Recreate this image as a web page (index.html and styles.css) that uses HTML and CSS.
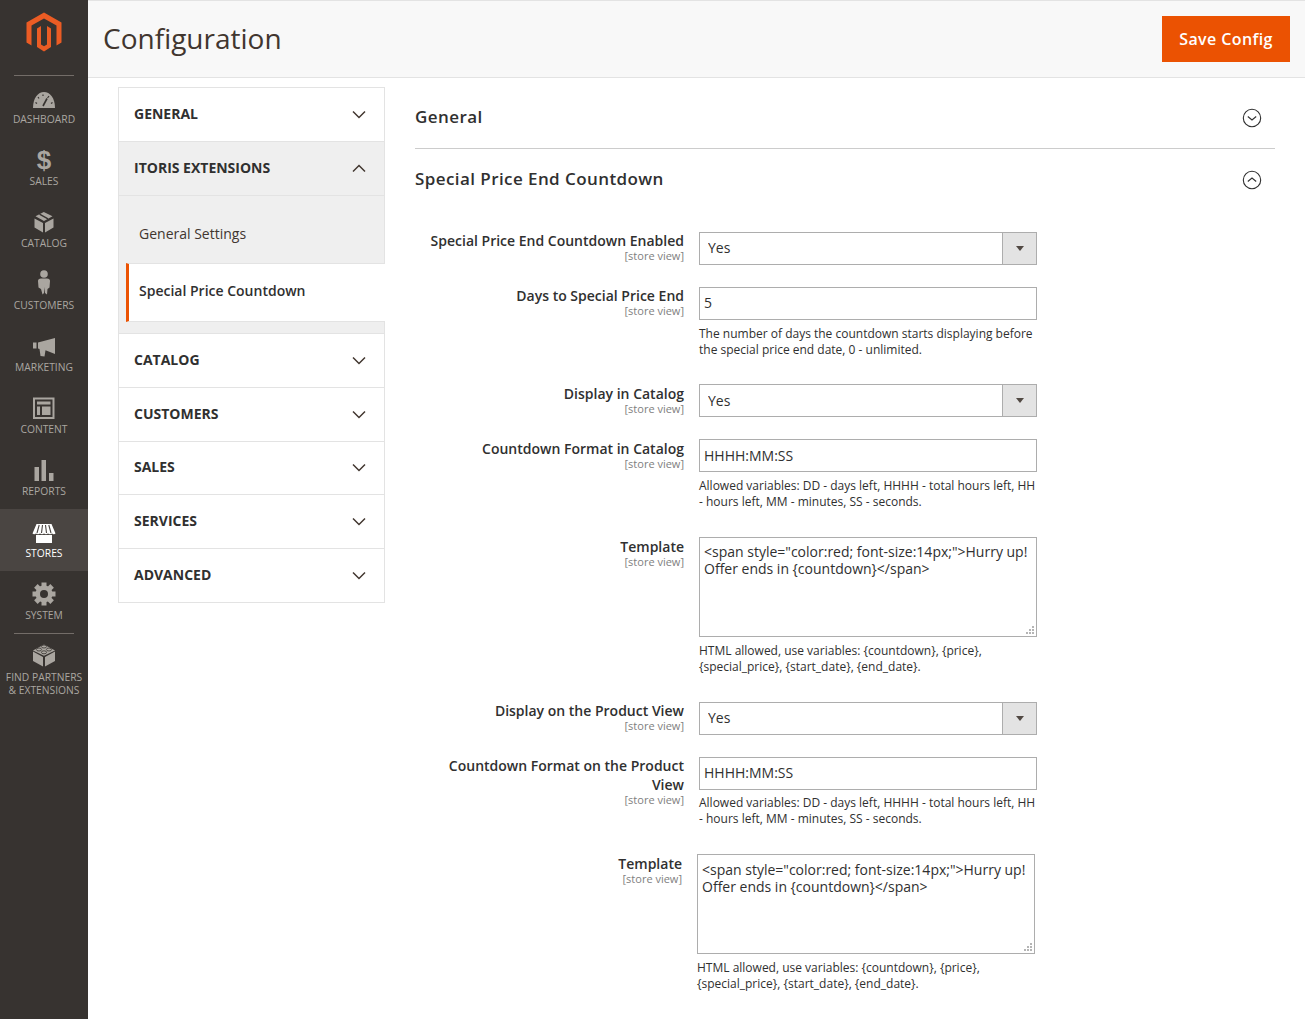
FILE: index.html
```html
<!DOCTYPE html>
<html lang="en">
<head>
  <meta charset="UTF-8">
  <title>Configuration</title>
  <link rel="stylesheet" href="styles.css">
</head>
<body>

  <nav class="side-menu">
    <div class="logo">
      <svg width="36" height="40" viewBox="26.5 12.5 36 40">
        <path fill="#eb5c24" d="M44.5 13 62 23V43L57 46V26L44.5 19 32 26V46L27 43V23Z"/>
        <path fill="#eb5c24" d="M37.5 29 41.5 26.5V45L44.5 46.8 47.5 45V26.5L51.5 29V47.5L44.5 52 37.5 47.5Z"/>
      </svg>
    </div>

    <a class="menu-item">
      <svg class="menu-icon" viewBox="0 0 24 24">
        <path fill="#aaa6a0" d="M1 22C1 12 6 6 12 6S23 12 23 22Z"/>
        <path stroke="#373330" stroke-width="1.2" d="M5 17.5 3.5 16.5M7 12.5 6 11M11 10V8.500M15.500 12 17 10M19 17.500 20.500 16.500"/>
        <path stroke="#373330" stroke-width="1.6" d="M11 20 15 12.500"/>
      </svg>
      <span>DASHBOARD</span>
    </a>
    <a class="menu-item">
      <span class="menu-icon dollar">$</span>
      <span>SALES</span>
    </a>
    <a class="menu-item">
      <svg class="menu-icon" viewBox="0 0 24 24">
        <path fill="#aaa6a0" d="M2.500 8.500 11 13V22.500L2.500 17.500ZM13 13 21.500 8.500V17.500L13 22.500ZM3.500 6.300 11.800 2 20.500 6.300 12 11Z"/>
        <path stroke="#373330" stroke-width="1.4" d="M7.500 4.200 16 8.800"/>
      </svg>
      <span>CATALOG</span>
    </a>
    <a class="menu-item">
      <svg class="menu-icon" viewBox="0 0 24 24">
        <circle cx="12" cy="2" r="3.800" fill="#aaa6a0"/>
        <path fill="#aaa6a0" d="M9 6.500H15Q18 6.500 18 9L17.500 15.500 15.500 17 15 22.500 13 21 12 15V21L10.500 22.500 9 17 6.500 15.500 6 9Q6 6.500 9 6.500Z"/>
      </svg>
      <span>CUSTOMERS</span>
    </a>
    <a class="menu-item">
      <svg class="menu-icon" viewBox="0 0 24 24">
        <path fill="#aaa6a0" d="M6 8.500 23 4V20L13.500 16.200 12.500 22.500 8.500 22 7.500 15 6 14.500ZM1 8.500H4.500V14.500H1Z"/>
      </svg>
      <span>MARKETING</span>
    </a>
    <a class="menu-item">
      <svg class="menu-icon" viewBox="0 0 24 24">
        <path fill="#aaa6a0" fill-rule="evenodd" d="M1 1.500H22.500V23H1ZM3 3.500V21H20.500V3.500Z"/>
        <path fill="#aaa6a0" d="M5 5.500H18.500V8.500H5ZM5 10.500H8V19H5ZM10 10.500H18.500V19H10Z"/>
      </svg>
      <span>CONTENT</span>
    </a>
    <a class="menu-item">
      <svg class="menu-icon" viewBox="0 0 24 24">
        <path fill="#aaa6a0" d="M2.500 9H7V23H2.500ZM9.500 2H14V23H9.500ZM17 15H21.500V23H17Z"/>
      </svg>
      <span>REPORTS</span>
    </a>
    <a class="menu-item active">
      <svg class="menu-icon" viewBox="0 0 24 24">
        <path fill="#fff" d="M4 15H20V23H4Z"/>
        <path fill="#fff" d="M4.500 4H19.500L23.500 13.500Q22 15 20 13.500 18 15 16 13.500 14 15 12 13.500 10 15 8 13.500 6 15 4 13.500 2 15 .5 13.500Z"/>
        <path stroke="#4a4542" stroke-width="1.100" d="M7.200 5 5 13M10.500 5 9.500 13M13.500 5 14.500 13M16.800 5 19 13"/>
      </svg>
      <span>STORES</span>
    </a>
    <a class="menu-item">
      <svg class="menu-icon" viewBox="0 0 24 24">
        <g fill="#aaa6a0">
          <circle cx="12" cy="12" r="8.500"/>
          <rect x="9.500" y="0.500" width="5" height="23"/>
          <rect x="9.500" y="0.500" width="5" height="23" transform="rotate(45 12 12)"/>
          <rect x="9.500" y="0.500" width="5" height="23" transform="rotate(90 12 12)"/>
          <rect x="9.500" y="0.500" width="5" height="23" transform="rotate(135 12 12)"/>
        </g>
        <circle cx="12" cy="12" r="4" fill="#373330"/>
      </svg>
      <span>SYSTEM</span>
    </a>
    <a class="menu-item partners">
      <svg class="menu-icon" viewBox="0 0 24 24">
        <path fill="#aaa6a0" d="M1 8.500 11 14V23.500L1 18ZM13 14 23 8.500V18L13 23.500ZM12 1.500 23 7.500 12 12.800 1 7.500Z"/>
        <g fill="#aaa6a0" stroke="#373330" stroke-width=".8">
          <ellipse cx="12" cy="3.500" rx="2.600" ry="1.500"/>
          <ellipse cx="7" cy="6.500" rx="2.600" ry="1.500"/>
          <ellipse cx="17" cy="6.500" rx="2.600" ry="1.500"/>
          <ellipse cx="12" cy="9.300" rx="2.600" ry="1.500"/>
        </g>
      </svg>
      <span>FIND PARTNERS<br>&amp; EXTENSIONS</span>
    </a>
  </nav>

  <div class="page">
    <header class="page-header">
      <h1>Configuration</h1>
      <button class="save-btn">Save Config</button>
    </header>

    <div class="page-body">
      <aside class="tabs">
        <div class="tab">GENERAL
          <svg class="chevron" viewBox="0 0 14 9"><path d="M1 1.500 7 7.500 13 1.500"/></svg>
        </div>
        <div class="tab open">ITORIS EXTENSIONS
          <svg class="chevron" viewBox="0 0 14 9"><path d="M1 7.500 7 1.500 13 7.500"/></svg>
        </div>
        <div class="sub-tabs">
          <a class="sub-tab">General Settings</a>
          <a class="sub-tab current">Special Price Countdown</a>
        </div>
        <div class="tab">CATALOG
          <svg class="chevron" viewBox="0 0 14 9"><path d="M1 1.500 7 7.500 13 1.500"/></svg>
        </div>
        <div class="tab">CUSTOMERS
          <svg class="chevron" viewBox="0 0 14 9"><path d="M1 1.500 7 7.500 13 1.500"/></svg>
        </div>
        <div class="tab">SALES
          <svg class="chevron" viewBox="0 0 14 9"><path d="M1 1.500 7 7.500 13 1.500"/></svg>
        </div>
        <div class="tab">SERVICES
          <svg class="chevron" viewBox="0 0 14 9"><path d="M1 1.500 7 7.500 13 1.500"/></svg>
        </div>
        <div class="tab">ADVANCED
          <svg class="chevron" viewBox="0 0 14 9"><path d="M1 1.500 7 7.500 13 1.500"/></svg>
        </div>
      </aside>

      <main class="content">
        <div class="section-head first">
          <h2>General</h2>
          <svg class="toggle" viewBox="0 0 20 20"><circle cx="10" cy="10" r="8.700"/><path d="M5.800 8.500 10 12 14.200 8.500"/></svg>
        </div>
        <div class="section-head">
          <h2>Special Price End Countdown</h2>
          <svg class="toggle" viewBox="0 0 20 20"><circle cx="10" cy="10" r="8.700"/><path d="M5.800 11.500 10 8 14.200 11.500"/></svg>
        </div>

        <div class="form-row">
          <div class="field-label">Special Price End Countdown Enabled<small>[store view]</small></div>
          <div class="field">
            <div class="select-wrap"><select><option>Yes</option></select></div>
          </div>
        </div>

        <div class="form-row">
          <div class="field-label">Days to Special Price End<small>[store view]</small></div>
          <div class="field">
            <input type="text" value="5">
            <p class="note tight">The number of days the countdown starts displaying before the special price end date, 0 - unlimited.</p>
          </div>
        </div>

        <div class="form-row low">
          <div class="field-label">Display in Catalog<small>[store view]</small></div>
          <div class="field">
            <div class="select-wrap"><select><option>Yes</option></select></div>
          </div>
        </div>

        <div class="form-row low">
          <div class="field-label">Countdown Format in Catalog<small>[store view]</small></div>
          <div class="field">
            <input type="text" value="HHHH:MM:SS">
            <p class="note">Allowed variables: DD - days left, HHHH - total hours left, HH - hours left, MM - minutes, SS - seconds.</p>
          </div>
        </div>

        <div class="form-row low">
          <div class="field-label">Template<small>[store view]</small></div>
          <div class="field">
            <div class="area-wrap">
              <textarea>&lt;span style="color:red; font-size:14px;"&gt;Hurry up! Offer ends in {countdown}&lt;/span&gt;</textarea>
            </div>
            <p class="note">HTML allowed, use variables: {countdown}, {price}, {special_price}, {start_date}, {end_date}.</p>
          </div>
        </div>

        <div class="form-row">
          <div class="field-label">Display on the Product View<small>[store view]</small></div>
          <div class="field">
            <div class="select-wrap"><select><option>Yes</option></select></div>
          </div>
        </div>

        <div class="form-row">
          <div class="field-label">Countdown Format on the Product View<small>[store view]</small></div>
          <div class="field">
            <input type="text" value="HHHH:MM:SS">
            <p class="note note-high">Allowed variables: DD - days left, HHHH - total hours left, HH - hours left, MM - minutes, SS - seconds.</p>
          </div>
        </div>

        <div class="form-row low shifted">
          <div class="field-label">Template<small>[store view]</small></div>
          <div class="field">
            <div class="area-wrap">
              <textarea>&lt;span style="color:red; font-size:14px;"&gt;Hurry up! Offer ends in {countdown}&lt;/span&gt;</textarea>
            </div>
            <p class="note">HTML allowed, use variables: {countdown}, {price}, {special_price}, {start_date}, {end_date}.</p>
          </div>
        </div>
      </main>
    </div>
  </div>

</body>
</html>
```

FILE: styles.css
```css
* {
  padding: 0;
  margin: 0;
  box-sizing: border-box;
}

*::before,
*::after {
  box-sizing: border-box;
}

html,
body {
  height: 100%;
  overflow: hidden;
}

body {
  display: flex;
  background: #fff;
  color: #303030;
  font-family: 'Open Sans', sans-serif;
  font-size: 14px;
}

/* left menu */

.side-menu {
  width: 88px;
  flex-shrink: 0;
  background: #373330;
  color: #aaa6a0;
  text-align: center;
}

.logo {
  height: 76px;
  padding-top: 12px;
  position: relative;
}

.logo::after,
.partners::before {
  content: '';
  display: block;
  width: 60px;
  height: 1px;
  background: #736d68;
  position: absolute;
  left: 14px;
}

.logo::after {
  top: 75px;
}

.partners::before {
  top: 0;
}

.menu-item {
  height: 62px;
  padding-top: 11px;
  display: flex;
  flex-direction: column;
  align-items: center;
  font-size: 10.3px;
  line-height: 13px;
  position: relative;
}

.side-menu .menu-item:nth-child(2) {
  margin-top: -1px;
}

.menu-item.active {
  background: #4a4542;
  color: #fff;
}

.menu-item.partners {
  height: 76px;
}

.menu-icon {
  width: 24px;
  height: 24px;
  margin-bottom: 3px;
  overflow: visible;
  fill: none;
}

.partners .menu-icon {
  margin-top: -1px;
  margin-bottom: 4px;
}

.dollar {
  font-family: 'Liberation Sans', sans-serif;
  font-size: 26px;
  font-weight: 700;
  line-height: 24px;
}

/* page header */

.page {
  flex: 1;
  min-width: 0;
}

.page-header {
  height: 78px;
  padding: 0 15px;
  display: flex;
  justify-content: space-between;
  align-items: center;
  background: #f8f8f8;
  border-top: 1px solid #e3e3e3;
  border-bottom: 1px solid #e3e3e3;
}

.page-header h1 {
  margin-bottom: 2px;
  font-size: 28px;
  font-weight: 400;
  color: #41362f;
}

.save-btn {
  width: 128px;
  height: 46px;
  border: 0;
  background: #eb5202;
  color: #fff;
  font-family: inherit;
  font-size: 16px;
  font-weight: 600;
  letter-spacing: .4px;
}

.page-body {
  padding: 9px 30px 0;
  display: flex;
  gap: 30px;
}

/* config tabs */

.tabs {
  width: 267px;
  flex-shrink: 0;
  align-self: flex-start;
  border-bottom: 1px solid #e3e3e3;
}

.tab {
  height: 53.750px;
  padding: 0 18px 2px 15px;
  display: flex;
  justify-content: space-between;
  align-items: center;
  border: 1px solid #e3e3e3;
  border-bottom: 0;
  font-weight: 700;
  color: #303030;
}

.tab.open {
  background: #efefef;
}

.chevron {
  width: 14px;
  height: 9px;
  margin-top: 2px;
  fill: none;
  stroke: #41362f;
  stroke-width: 1.500;
}

.sub-tabs {
  height: 138.500px;
  padding: 1px 0 0 7px;
  background: #efefef;
  border: 1px solid #e3e3e3;
  border-bottom: 0;
}

.sub-tab {
  height: 66px;
  padding: 8px 0 0 13px;
  display: flex;
  align-items: center;
  color: #41362f;
}

.sub-tab.current {
  height: 59px;
  margin-right: -1px;
  padding: 0 0 3px 10px;
  background: #fff;
  border-top: 1px solid #e3e3e3;
  border-bottom: 1px solid #e3e3e3;
  border-left: 3px solid #eb5202;
  font-weight: 600;
  color: #303030;
}

/* form */

.content {
  flex: 1;
  min-width: 0;
}

.section-head {
  display: flex;
  justify-content: space-between;
  align-items: center;
  height: 62px;
  padding-right: 13px;
}

.section-head.first {
  border-bottom: 1px solid #ccc;
}

.section-head h2 {
  margin-bottom: 4px;
  font-size: 17px;
  font-weight: 600;
  letter-spacing: .42px;
  color: #303030;
}

.section-head.first h2 {
  margin-bottom: 2px;
}

.toggle {
  width: 20px;
  height: 20px;
  fill: none;
  stroke: #303030;
  stroke-width: 1.100;
}

.form-row {
  display: flex;
  padding-bottom: 22px;
}

.section-head + .form-row {
  margin-top: 21px;
}

.field-label {
  width: 284px;
  margin-top: -1px;
  padding-right: 15px;
  text-align: right;
  font-weight: 600;
  line-height: 19px;
  color: #303030;
}

.low .field-label {
  margin-top: 0;
}

.field-label small {
  display: block;
  font-size: 11px;
  font-weight: 400;
  line-height: 11px;
  color: #808080;
}

.field {
  width: 338px;
}

.shifted .field-label {
  width: 282px;
}

input,
textarea,
select {
  display: block;
  width: 100%;
  background: #fff;
  border: 1px solid #adadad;
  color: #303030;
  font-family: inherit;
  font-size: 14px;
  border-radius: 0;
  outline: 0;
}

input {
  height: 33px;
  padding: 0 4px 2px;
}

.low input {
  padding-bottom: 0;
}

textarea {
  height: 100px;
  padding: 5px 4px;
  line-height: 17px;
  resize: none;
}

.shifted textarea {
  padding-top: 6px;
}

.area-wrap {
  position: relative;
}

/* resize grip, six dots in a triangle */
.area-wrap::after {
  content: '';
  position: absolute;
  right: 3px;
  bottom: 3px;
  width: 8px;
  height: 8px;
  background:
    linear-gradient(#b5b5b5, #b5b5b5) 6px 0 / 2px 2px no-repeat,
    linear-gradient(#b5b5b5, #b5b5b5) 3px 3px / 2px 2px no-repeat,
    linear-gradient(#b5b5b5, #b5b5b5) 6px 3px / 2px 2px no-repeat,
    linear-gradient(#b5b5b5, #b5b5b5) 0 6px / 2px 2px no-repeat,
    linear-gradient(#b5b5b5, #b5b5b5) 3px 6px / 2px 2px no-repeat,
    linear-gradient(#b5b5b5, #b5b5b5) 6px 6px / 2px 2px no-repeat;
}

.select-wrap {
  position: relative;
}

select {
  height: 33px;
  padding: 0 4px 2px 8px;
  appearance: none;
}

.low select {
  padding-bottom: 0;
}

.select-wrap::after {
  content: '';
  position: absolute;
  top: 0;
  right: 0;
  width: 35px;
  height: 33px;
  background: #e3e3e3;
  border: 1px solid #adadad;
}

.select-wrap::before {
  content: '';
  position: absolute;
  z-index: 1;
  top: 14px;
  right: 13px;
  border: 4px solid transparent;
  border-top: 5px solid #514943;
  border-bottom: 0;
}

.note {
  margin: 6px 0 5px;
  font-size: 12px;
  line-height: 16px;
  color: #303030;
}

.note.tight {
  margin-bottom: 4px;
}

.note.note-high {
  margin: 5px 0 5px;
}
```
